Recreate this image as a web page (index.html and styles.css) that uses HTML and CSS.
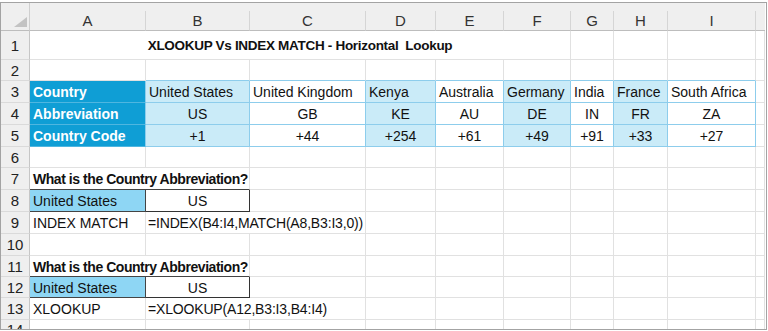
FILE: index.html
```html
<!DOCTYPE html>
<html>
<head>
<meta charset="utf-8">
<link rel="stylesheet" href="styles.css">
</head>
<body>
<div class="frame">
  <div class="sheet">
    <div class="corner"><svg width="29" height="28" viewBox="0 0 29 28"><polygon points="26,14 26,24 13,24" fill="#c3c3c3"/></svg></div>
    <div class="strip"></div>
    <div class="ch">A</div><div class="ch">B</div><div class="ch">C</div><div class="ch">D</div><div class="ch">E</div><div class="ch">F</div><div class="ch">G</div><div class="ch">H</div><div class="ch">I</div><div class="ch last"></div>

    <!-- row 1 -->
    <div class="rh">1</div>
    <div class="c title span6">XLOOKUP Vs INDEX MATCH - Horizontal  Lookup</div>
    <div class="c"></div><div class="c"></div><div class="c"></div><div class="c"></div>

    <!-- row 2 -->
    <div class="rh">2</div>
    <div class="c"></div>
    <div class="c tb"></div><div class="c tb"></div><div class="c tb"></div><div class="c tb"></div><div class="c tb"></div><div class="c tb"></div><div class="c tb"></div><div class="c tb"></div>
    <div class="c"></div>

    <!-- row 3 -->
    <div class="rh">3</div>
    <div class="c hd">Country</div>
    <div class="c t lt">United States</div>
    <div class="c t">United Kingdom</div>
    <div class="c t lt">Kenya</div>
    <div class="c t">Australia</div>
    <div class="c t lt">Germany</div>
    <div class="c t">India</div>
    <div class="c t lt">France</div>
    <div class="c t">South Africa</div>
    <div class="c"></div>

    <!-- row 4 -->
    <div class="rh">4</div>
    <div class="c hd">Abbreviation</div>
    <div class="c t lt ctr">US</div>
    <div class="c t ctr">GB</div>
    <div class="c t lt ctr">KE</div>
    <div class="c t ctr">AU</div>
    <div class="c t lt ctr">DE</div>
    <div class="c t ctr">IN</div>
    <div class="c t lt ctr">FR</div>
    <div class="c t ctr">ZA</div>
    <div class="c"></div>

    <!-- row 5 -->
    <div class="rh">5</div>
    <div class="c hd">Country Code</div>
    <div class="c t lt ctr">+1</div>
    <div class="c t ctr">+44</div>
    <div class="c t lt ctr">+254</div>
    <div class="c t ctr">+61</div>
    <div class="c t lt ctr">+49</div>
    <div class="c t ctr">+91</div>
    <div class="c t lt ctr">+33</div>
    <div class="c t ctr">+27</div>
    <div class="c"></div>

    <!-- row 6 -->
    <div class="rh">6</div>
    <div class="c"></div><div class="c"></div><div class="c"></div><div class="c"></div><div class="c"></div><div class="c"></div><div class="c"></div><div class="c"></div><div class="c"></div><div class="c"></div>

    <!-- row 7 -->
    <div class="rh">7</div>
    <div class="c b span2 qb">What is the Country Abbreviation?</div>
    <div class="c"></div><div class="c"></div><div class="c"></div><div class="c"></div><div class="c"></div><div class="c"></div><div class="c"></div><div class="c"></div>

    <!-- row 8 -->
    <div class="rh">8</div>
    <div class="c sel">United States</div>
    <div class="c box ctr">US</div>
    <div class="c"></div><div class="c"></div><div class="c"></div><div class="c"></div><div class="c"></div><div class="c"></div><div class="c"></div><div class="c"></div>

    <!-- row 9 -->
    <div class="rh">9</div>
    <div class="c">INDEX MATCH</div>
    <div class="c span2 f">=INDEX(B4:I4,MATCH(A8,B3:I3,0))</div>
    <div class="c"></div><div class="c"></div><div class="c"></div><div class="c"></div><div class="c"></div><div class="c"></div><div class="c"></div>

    <!-- row 10 -->
    <div class="rh">10</div>
    <div class="c"></div><div class="c"></div><div class="c"></div><div class="c"></div><div class="c"></div><div class="c"></div><div class="c"></div><div class="c"></div><div class="c"></div><div class="c"></div>

    <!-- row 11 -->
    <div class="rh">11</div>
    <div class="c b span2 qb">What is the Country Abbreviation?</div>
    <div class="c"></div><div class="c"></div><div class="c"></div><div class="c"></div><div class="c"></div><div class="c"></div><div class="c"></div><div class="c"></div>

    <!-- row 12 -->
    <div class="rh">12</div>
    <div class="c sel">United States</div>
    <div class="c box ctr">US</div>
    <div class="c"></div><div class="c"></div><div class="c"></div><div class="c"></div><div class="c"></div><div class="c"></div><div class="c"></div><div class="c"></div>

    <!-- row 13 -->
    <div class="rh">13</div>
    <div class="c">XLOOKUP</div>
    <div class="c span2 f">=XLOOKUP(A12,B3:I3,B4:I4)</div>
    <div class="c"></div><div class="c"></div><div class="c"></div><div class="c"></div><div class="c"></div><div class="c"></div><div class="c"></div>

    <!-- row 14 -->
    <div class="rh">14</div>
    <div class="c"></div><div class="c"></div><div class="c"></div><div class="c"></div><div class="c"></div><div class="c"></div><div class="c"></div><div class="c"></div><div class="c"></div><div class="c"></div>
  </div>
</div>
</body>
</html>
```

FILE: styles.css
```css
* { box-sizing: border-box; }
html, body { margin: 0; padding: 0; background: #ffffff; }
body {
  font-family: "Liberation Sans", Arial, sans-serif;
  font-size: 14px;
  color: #111;
}
.frame {
  margin-top: 2px;
  width: 767px;
  height: 328px;
  border: 1px solid #a3a3a3;
  overflow: hidden;
  background: #fff;
}
.sheet {
  display: grid;
  grid-template-columns: 29px 116px 104px 116px 70px 68px 67px 43px 54px 88px 9px;
  grid-template-rows: 8px 20px 29px 21px 22px 22px 22px 21px 22px 22px 22px 22px 21px 21px 22px 20px;
  background: #fff;
}
.corner {
  grid-row: 1 / span 2;
  grid-column: 1;
  background: #efefef;
  border-right: 1px solid #cfcfcf;
  border-bottom: 1px solid #bdbdbd;
}
.corner svg { display: block; }
.strip {
  grid-row: 1;
  grid-column: 2 / span 10;
  background: #efefef;
}
.ch {
  background: #efefef;
  border-right: 1px solid #d5d5d5;
  border-bottom: 1px solid #bdbdbd;
  display: flex;
  align-items: center;
  justify-content: center;
  font-size: 15px;
  color: #333;
}
.ch.last { border-right: none; }
.rh {
  background: #efefef;
  border-right: 1px solid #c6c6c6;
  border-bottom: 1px solid #dadada;
  display: flex;
  align-items: center;
  justify-content: center;
  font-size: 15px;
  color: #222;
}
.c {
  border-right: 1px solid #e1e1e1;
  border-bottom: 1px solid #e1e1e1;
  display: flex;
  align-items: center;
  padding: 1px 3px 0 3px;
  white-space: pre;
  overflow: hidden;
}
.span2 { grid-column: span 2; padding-right: 0; }
.span6 { grid-column: span 6; }
.f { letter-spacing: -0.17px; padding-left: 2px; }
.title {
  font-weight: bold;
  font-size: 13.5px;
  letter-spacing: -0.3px;
  justify-content: center;
  padding-left: 0;
  padding-right: 0;
}
.b { font-weight: bold; }
.span2.b { letter-spacing: -0.45px; padding-left: 3px; }
.ctr { justify-content: center; }
.tb { border-bottom-color: #8dcdec; }
.t {
  border-right-color: #8dcdec;
  border-bottom-color: #8dcdec;
}
.lt { background: #caebf8; }
.hd {
  background: #0f9ed5;
  color: #fff;
  font-weight: bold;
  border-right-color: #8dcdec;
  border-bottom-color: #4fb6e0;
}
.qb { border-bottom-color: #444; }
.sel {
  background: #8ed6f4;
  border-right: 1px solid #444;
  border-bottom: 1px solid #444;
}
.box {
  border-right: 1px solid #333;
  border-bottom: 1px solid #333;
}
```
